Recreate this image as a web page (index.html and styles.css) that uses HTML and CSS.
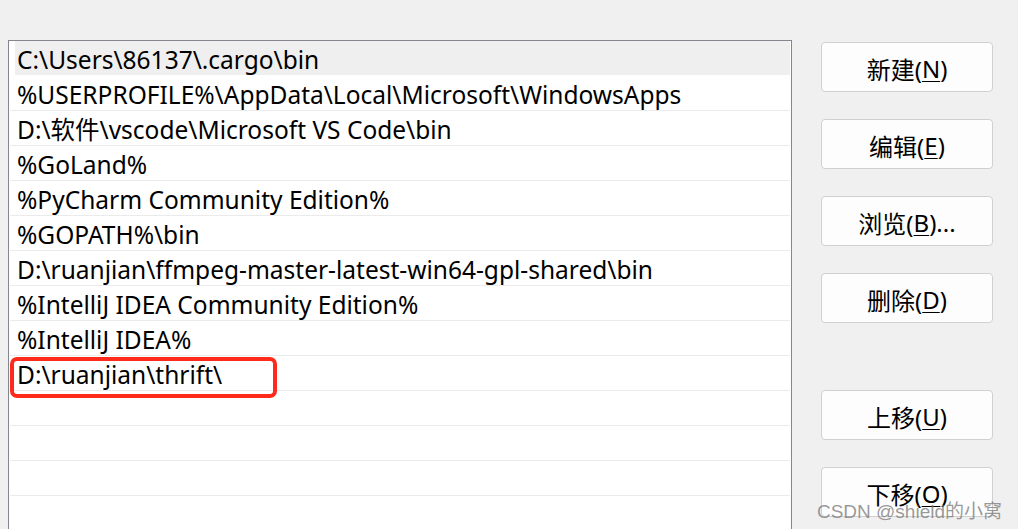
FILE: index.html
```html
<!DOCTYPE html>
<html lang="zh-CN">
<head>
<meta charset="utf-8">
<title>编辑环境变量</title>
<link rel="stylesheet" href="styles.css">
</head>
<body>
<div class="dialog">
  <div class="list">
    <div class="row selected">C:\Users\86137\.cargo\bin</div>
    <div class="row">%USERPROFILE%\AppData\Local\Microsoft\WindowsApps</div>
    <div class="row">D:\软件\vscode\Microsoft VS Code\bin</div>
    <div class="row">%GoLand%</div>
    <div class="row">%PyCharm Community Edition%</div>
    <div class="row">%GOPATH%\bin</div>
    <div class="row">D:\ruanjian\ffmpeg-master-latest-win64-gpl-shared\bin</div>
    <div class="row">%IntelliJ IDEA Community Edition%</div>
    <div class="row">%IntelliJ IDEA%</div>
    <div class="row marked">D:\ruanjian\thrift\</div>
    <div class="row"></div>
    <div class="row"></div>
    <div class="row"></div>
    <div class="row"></div>
  </div>
  <div class="buttons">
    <div class="btn">新建(<u>N</u>)</div>
    <div class="btn">编辑(<u>E</u>)</div>
    <div class="btn">浏览(<u>B</u>)...</div>
    <div class="btn">删除(<u>D</u>)</div>
    <div class="btn spaced">上移(<u>U</u>)</div>
    <div class="btn">下移(<u>O</u>)</div>
  </div>
</div>
<div class="watermark">CSDN @shield的小窝</div>
</body>
</html>
```

FILE: styles.css
```css
html, body {
  margin: 0;
  padding: 0;
  height: 100%;
  overflow: hidden;
}
body {
  background: #f0f0f0;
  font-family: "Noto Sans", "Noto Sans CJK SC", sans-serif;
  color: #000;
  position: relative;
}
.dialog {
  display: flex;
  align-items: flex-start;
  padding: 40px 0 0 8px;
}
.list {
  width: 781px;
  height: 600px;
  background: #fff;
  border: 1px solid #85858f;
  box-sizing: content-box;
  padding-left: 1px;
}
.row {
  position: relative;
  height: 34px;
  border-bottom: 1px solid #ebebeb;
  margin-right: 1px;
  font-size: 24.5px;
  line-height: 38px;
  padding-left: 7px;
  white-space: nowrap;
}
.row.selected {
  background: #efefef;
  margin-left: 5px;
  padding-left: 2px;
  border-bottom-color: #fff;
}
.row.marked::after {
  content: "";
  position: absolute;
  left: 0;
  top: 1px;
  width: 259px;
  height: 33px;
  border: 4px solid #fe2a1c;
  border-radius: 7px;
}
.buttons {
  display: flex;
  flex-direction: column;
  gap: 27px;
  margin-left: 29px;
  margin-top: 2px;
}
.btn {
  width: 170px;
  height: 48px;
  border: 1px solid #d0d0d0;
  border-radius: 4px;
  background: #fdfdfd;
  display: flex;
  align-items: center;
  justify-content: center;
  font-size: 24px;
  padding-top: 2px;
  box-sizing: content-box;
  height: 46px;
}
.btn u {
  text-underline-offset: 3px;
  text-decoration-thickness: 1px;
}
.btn.spaced {
  margin-top: 40px;
}
.watermark {
  position: absolute;
  right: 16px;
  bottom: 6px;
  font-family: "Liberation Sans", "Noto Sans CJK SC", sans-serif;
  font-size: 19px;
  color: rgba(120, 120, 120, 0.75);
  white-space: nowrap;
}
```
